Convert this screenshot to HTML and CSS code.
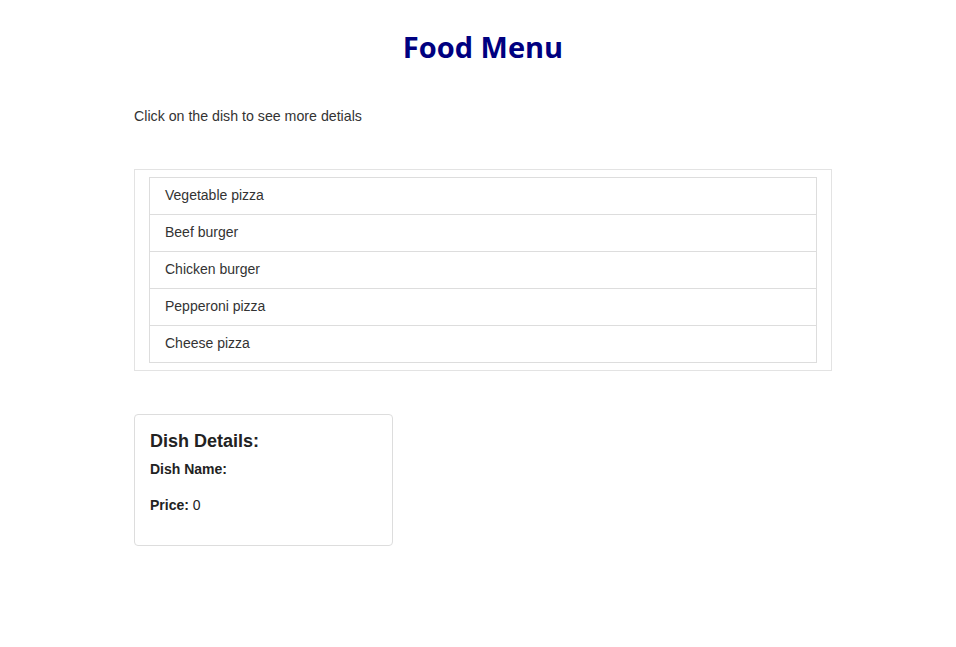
FILE: index.html
```html
<!DOCTYPE html>
<html lang="en">
<head>
    <meta charset="UTF-8">
    <meta name="viewport" content="width=device-width, initial-scale=1.0">
    <title>Food Menu</title>
    <link rel="stylesheet" href="styles.css">
</head>
<body>
    <h1 class="title">Food Menu</h1>

    <div class="container">
        <p class="hint">Click on the dish to see more detials</p>

        <div class="menu-box">
            <ul class="dish-list">
                <li onclick="showDish('Vegetable pizza', 10)">Vegetable pizza</li>
                <li onclick="showDish('Beef burger', 8)">Beef burger</li>
                <li onclick="showDish('Chicken burger', 7)">Chicken burger</li>
                <li onclick="showDish('Pepperoni pizza', 12)">Pepperoni pizza</li>
                <li onclick="showDish('Cheese pizza', 9)">Cheese pizza</li>
            </ul>
        </div>

        <div class="details">
            <h3>Dish Details:</h3>
            <p><strong>Dish Name:</strong> <span id="dish-name"></span></p>
            <p><strong>Price:</strong> <span id="dish-price">0</span></p>
        </div>
    </div>

    <script>
        function showDish(name, price) {
            document.getElementById('dish-name').textContent = name;
            document.getElementById('dish-price').textContent = price;
        }
    </script>
</body>
</html>
```

FILE: styles.css
```css
body { margin: 0; padding: 0; background-color: #fff; color: #333; font-family: 'Liberation Sans', Arial, sans-serif; font-size: 14px; line-height: 1.42857; }
.title { margin: 0; padding-top: 27px; padding-left: 10px; text-align: center; font-family: 'Open Sans', 'Noto Sans', sans-serif; font-weight: 700; font-size: 29px; line-height: 40px; color: #000080; }
.container { width: 698px; margin-left: 134px; }
.hint { margin: 39px 0 43px; font-size: 14.2px; }
.menu-box { border: 1px solid #e3e3e3; padding: 7px 14px 7px 14px; }
.dish-list { list-style: none; margin: 0; padding: 0; }
.dish-list li { padding: 7px 15px 9px; border: 1px solid #ddd; margin-bottom: -1px; line-height: 20px; cursor: pointer; }
.dish-list li:last-child { margin-bottom: 0; }
.dish-list li:hover { background-color: #f5f5f5; }
.details { width: 227px; margin-top: 43px; padding: 14px 15px 14px; border: 1px solid #ddd; border-radius: 4px; }
.details h3 { margin: 0 0 6px; font-size: 18px; line-height: 24px; color: #222; }
.details p { margin: 0 0 16px; font-size: 14px; line-height: 20px; color: #222; }
```
